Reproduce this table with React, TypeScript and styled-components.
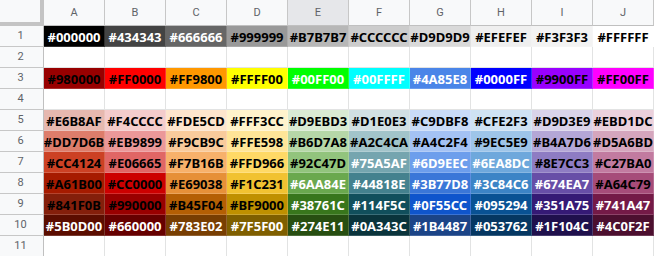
import React from "react";
import styled, { createGlobalStyle } from "styled-components";

const GlobalStyle = createGlobalStyle`
  html, body {
    margin: 0;
    padding: 0;
    background: #ffffff;
  }
  * { box-sizing: border-box; }
`;

type Swatch = { hex: string; light?: boolean };

const COLUMNS = ["A", "B", "C", "D", "E", "F", "G", "H", "I", "J"];
const ACTIVE_COLUMN = "E";

// light = white label text on a dark fill
const w = (hex: string): Swatch => ({ hex, light: true });
const b = (hex: string): Swatch => ({ hex });

const ROWS: (Swatch[] | null)[] = [
  [w("000000"), w("434343"), w("666666"), b("999999"), b("B7B7B7"), b("CCCCCC"), b("D9D9D9"), b("EFEFEF"), b("F3F3F3"), b("FFFFFF")],
  null,
  [b("980000"), b("FF0000"), b("FF9800"), b("FFFF00"), w("00FF00"), w("00FFFF"), w("4A85E8"), w("0000FF"), b("9900FF"), b("FF00FF")],
  null,
  [b("E6B8AF"), b("F4CCCC"), b("FDE5CD"), b("FFF3CC"), b("D9EBD3"), b("D1E0E3"), b("C9DBF8"), b("CFE2F3"), b("D9D3E9"), b("EBD1DC")],
  [b("DD7D6B"), b("EB9899"), b("F9CB9C"), b("FFE598"), b("B6D7A8"), b("A2C4CA"), b("A4C2F4"), b("9EC5E9"), b("B4A7D6"), b("D5A6BD")],
  [b("CC4124"), b("E06665"), b("F7B16B"), b("FFD966"), b("92C47D"), w("75A5AF"), w("6D9EEC"), w("6EA8DC"), b("8E7CC3"), b("C27BA0")],
  [b("A61B00"), b("CC0000"), b("E69038"), b("F1C231"), w("6AA84E"), w("44818E"), w("3B77D8"), w("3C84C6"), w("674EA7"), b("A64C79")],
  [b("841F0B"), b("990000"), b("B45F04"), b("BF9000"), w("38761C"), w("114F5C"), w("0F55CC"), w("095294"), w("351A75"), w("741A47")],
  [w("5B0D00"), w("660000"), w("783E02"), w("7F5F00"), w("274E11"), w("0A343C"), w("1B4487"), w("053762"), w("1F104C"), w("4C0F2F")],
  null,
];

const Sheet = styled.div`
  display: grid;
  grid-template-columns: 44px repeat(10, 61px);
  grid-template-rows: 26px repeat(11, 21px);
  width: 654px;
  font-family: Arial, "Liberation Sans", sans-serif;
`;

const Corner = styled.div`
  background: #f8f9fa;
  border-right: 4px solid #c4c4c4;
  border-bottom: 4px solid #c4c4c4;
`;

const ColumnHeader = styled.div<{ $active?: boolean }>`
  display: flex;
  align-items: flex-end;
  justify-content: center;
  padding-bottom: 6px;
  background: ${(p) => (p.$active ? "#e6e7ea" : "#f8f9fa")};
  border-right: 1px solid #c7c7c7;
  border-bottom: 1px solid #c0c0c0;
  color: #5f6368;
  font-family: Roboto, Arial, sans-serif;
  font-size: 11px;
  line-height: 12px;
`;

const RowHeader = styled.div`
  display: flex;
  align-items: center;
  justify-content: center;
  padding-right: 2px;
  background: #f8f9fa;
  border-right: 1px solid #c0c0c0;
  border-bottom: 1px solid #c7c7c7;
  color: #5f6368;
  font-family: Roboto, Arial, sans-serif;
  font-size: 11px;
  line-height: 20px;
`;

const Cell = styled.div<{ $fill?: string; $light?: boolean }>`
  display: flex;
  justify-content: center;
  overflow: hidden;
  white-space: nowrap;
  padding-top: 2px;
  background: ${(p) => (p.$fill ? `#${p.$fill}` : "#ffffff")};
  border-right: 1px solid
    ${(p) => (p.$fill ? "rgba(255, 255, 255, 0.18)" : "#e2e3e3")};
  border-bottom: 1px solid
    ${(p) => (p.$fill ? "rgba(255, 255, 255, 0.18)" : "#e2e3e3")};
  color: ${(p) => (p.$light ? "#ffffff" : "#000000")};
  font-family: "Noto Sans", "Open Sans", sans-serif;
  font-weight: 700;
  font-size: 13px;
  line-height: 18px;
`;

export default function App() {
  return (
    <>
      <GlobalStyle />
      <Sheet>
        <Corner />
        {COLUMNS.map((c) => (
          <ColumnHeader key={c} $active={c === ACTIVE_COLUMN}>
            {c}
          </ColumnHeader>
        ))}
        {ROWS.map((row, r) => (
          <React.Fragment key={r}>
            <RowHeader>{r + 1}</RowHeader>
            {COLUMNS.map((c, i) => {
              const sw = row ? row[i] : undefined;
              return (
                <Cell key={c} $fill={sw?.hex} $light={sw?.light}>
                  {sw ? `#${sw.hex}` : ""}
                </Cell>
              );
            })}
          </React.Fragment>
        ))}
      </Sheet>
    </>
  );
}
